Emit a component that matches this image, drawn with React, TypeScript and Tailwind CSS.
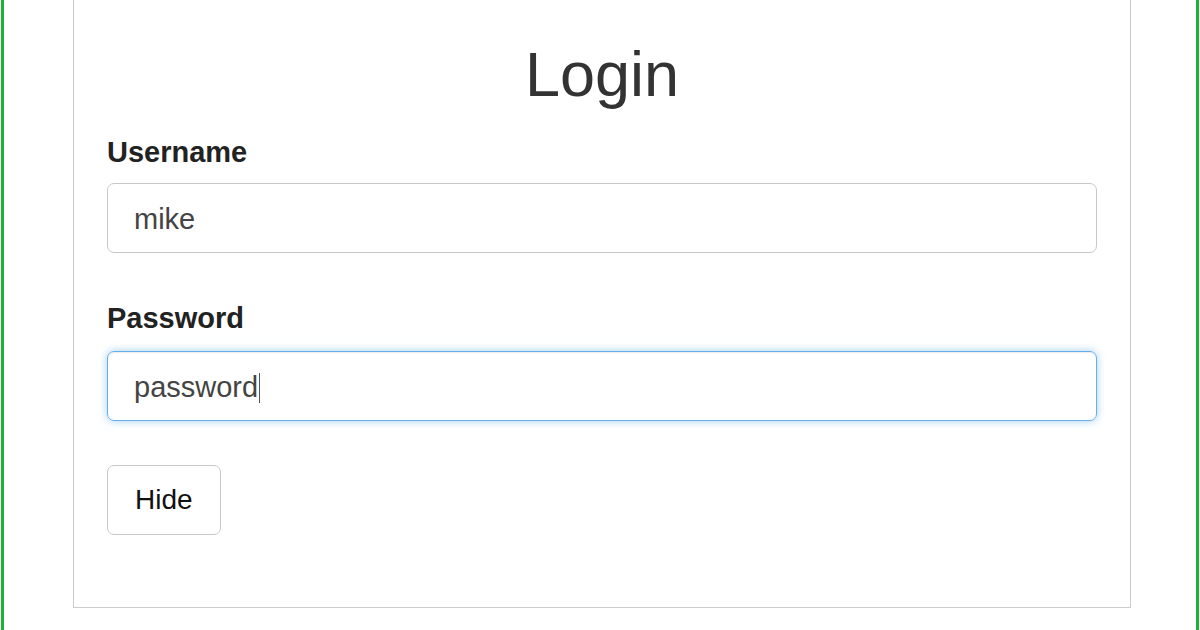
export default function App() {
  return (
    <div className="h-[630px] w-[1200px] overflow-hidden bg-white font-['Liberation_Sans',Arial,sans-serif] text-[#333]">
      <div className="ml-px flex h-full w-[1198px] flex-col border-x-[3px] border-[#1db13a]">
        {/* login panel, top edge runs off the page */}
        <div className="-mt-[20px] ml-[69px] w-[1058px] border border-[#cccccc] px-[33px] pt-[59px] pb-[72px]">
          <h1 className="text-center text-[63px] leading-[69px] font-normal text-[#333]">Login</h1>

          <div className="mt-[23px]">
            <label className="block text-[29px] leading-[40px] font-bold text-[#222]">Username</label>
            <div className="mt-[11px] flex h-[70px] items-center rounded-[7px] border border-[#c8c8c8] px-[26px] pt-[3px] text-[29px] text-[#444]">
              mike
            </div>
          </div>

          <div className="mt-[45px]">
            <label className="block text-[29px] leading-[40px] font-bold text-[#222]">Password</label>
            <div className="mt-[13px] flex h-[70px] items-center rounded-[7px] border border-[#66afe9] px-[26px] pt-[3px] text-[29px] text-[#444] shadow-[inset_0_1px_1px_rgba(0,0,0,0.075),0_0_8px_rgba(102,175,233,0.6)]">
              password
              <span className="ml-px h-[30px] w-px bg-[#555]" />
            </div>
          </div>

          <button className="mt-[44px] h-[70px] rounded-[7px] border border-[#c8c8c8] bg-white px-[27px] text-[28px] text-[#111]">
            Hide
          </button>
        </div>
      </div>
    </div>
  );
}
